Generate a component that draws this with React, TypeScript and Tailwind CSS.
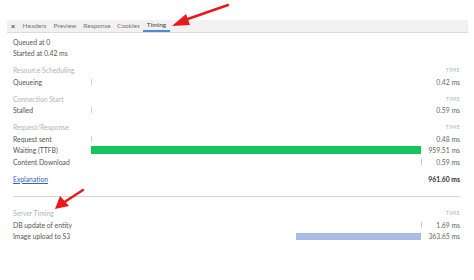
const font = { fontFamily: 'Lato, "Noto Sans", sans-serif' };

function Row({ label, time, children }: { label: string; time: string; children?: React.ReactNode }) {
  return (
    <div className="flex items-center h-[11.5px]">
      <div className="w-[78px] text-[#555]">{label}</div>
      <div className="relative w-[331px] h-full flex items-center">{children}</div>
      <div className="flex-1 text-right text-[#666]">{time}</div>
    </div>
  );
}

function Header({ label }: { label: string }) {
  return (
    <div className="flex items-center h-[11.5px] mt-[5.5px] text-[#b4b4b4]">
      <div className="flex-1">{label}</div>
      <div className="text-[5.5px] tracking-[0.3px]">TIME</div>
    </div>
  );
}

const tabs = [
  { name: "Headers", w: "w-[31px]" },
  { name: "Preview", w: "w-[30px]" },
  { name: "Response", w: "w-[34px]" },
  { name: "Cookies", w: "w-[29px]" },
  { name: "Timing", w: "w-[27px]" },
];

export default function App() {
  return (
    <div className="relative w-[474px] h-[280px] bg-white overflow-hidden text-[6.8px]" style={font}>
      <div className="pt-[20px] pl-[7px] pr-[6px]">
        <div className="flex items-stretch h-[13px] bg-[#f1f1f1] border-b border-[#dcdcdc] text-[6.5px]">
          <div className="w-[12px] flex items-center justify-center text-[#555] text-[8px] font-bold">×</div>
          {tabs.map((t) => (
            <div
              key={t.name}
              className={
                t.name === "Timing"
                  ? `${t.w} flex items-center justify-center text-[#444] border-b-2 border-[#4c8bd6]`
                  : `${t.w} flex items-center justify-center text-[#777]`
              }
            >
              {t.name}
            </div>
          ))}
        </div>
      </div>

      <div className="pl-[13px] pr-[14px] pt-[3px]">
        <div className="h-[11.5px] flex items-center text-[#555]">Queued at 0</div>
        <div className="h-[11.5px] flex items-center text-[#555]">Started at 0.42 ms</div>

        <Header label="Resource Scheduling" />
        <Row label="Queueing" time="0.42 ms">
          <div className="w-px h-[6px] bg-[#cfcfcf]" />
        </Row>

        <Header label="Connection Start" />
        <Row label="Stalled" time="0.59 ms">
          <div className="w-px h-[6px] bg-[#cfcfcf]" />
        </Row>

        <Header label="Request/Response" />
        <Row label="Request sent" time="0.48 ms">
          <div className="w-px h-[6px] bg-[#cfcfcf]" />
        </Row>
        <Row label="Waiting (TTFB)" time="959.51 ms">
          <div className="w-[330px] h-[8px] bg-[#16c35c]" />
        </Row>
        <Row label="Content Download" time="0.59 ms">
          <div className="ml-[330px] w-px h-[6px] bg-[#b9c8e0]" />
        </Row>

        <div className="flex items-center h-[11.5px] mt-[5.5px]">
          <div className="flex-1 text-[#3a5fc4] underline">Explanation</div>
          <div className="font-bold text-[#333]">961.60 ms</div>
        </div>

        <div className="mt-[11px] h-px bg-[#d6d6d6]" />

        <div className="pt-[5.5px]">
          <Header label="Server Timing" />
          <Row label="DB update of entity" time="1.69 ms">
            <div className="ml-[330px] w-px h-[6px] bg-[#cfcfcf]" />
          </Row>
          <Row label="Image upload to S3" time="363.65 ms">
            <div className="ml-[205px] w-[125px] h-[7px] bg-[#a8bde6]" />
          </Row>
        </div>
      </div>

      <svg className="absolute inset-0 pointer-events-none" width="474" height="280">
        <line x1="228" y1="5" x2="182" y2="21" stroke="#e8191b" strokeWidth="2.5" strokeLinecap="round" />
        <polygon points="172,26 186,14 190,25" fill="#e8191b" />
        <line x1="83" y1="190" x2="63" y2="203" stroke="#e8191b" strokeWidth="2.5" strokeLinecap="round" />
        <polygon points="55,209 60,196 69,206" fill="#e8191b" />
      </svg>
    </div>
  );
}
